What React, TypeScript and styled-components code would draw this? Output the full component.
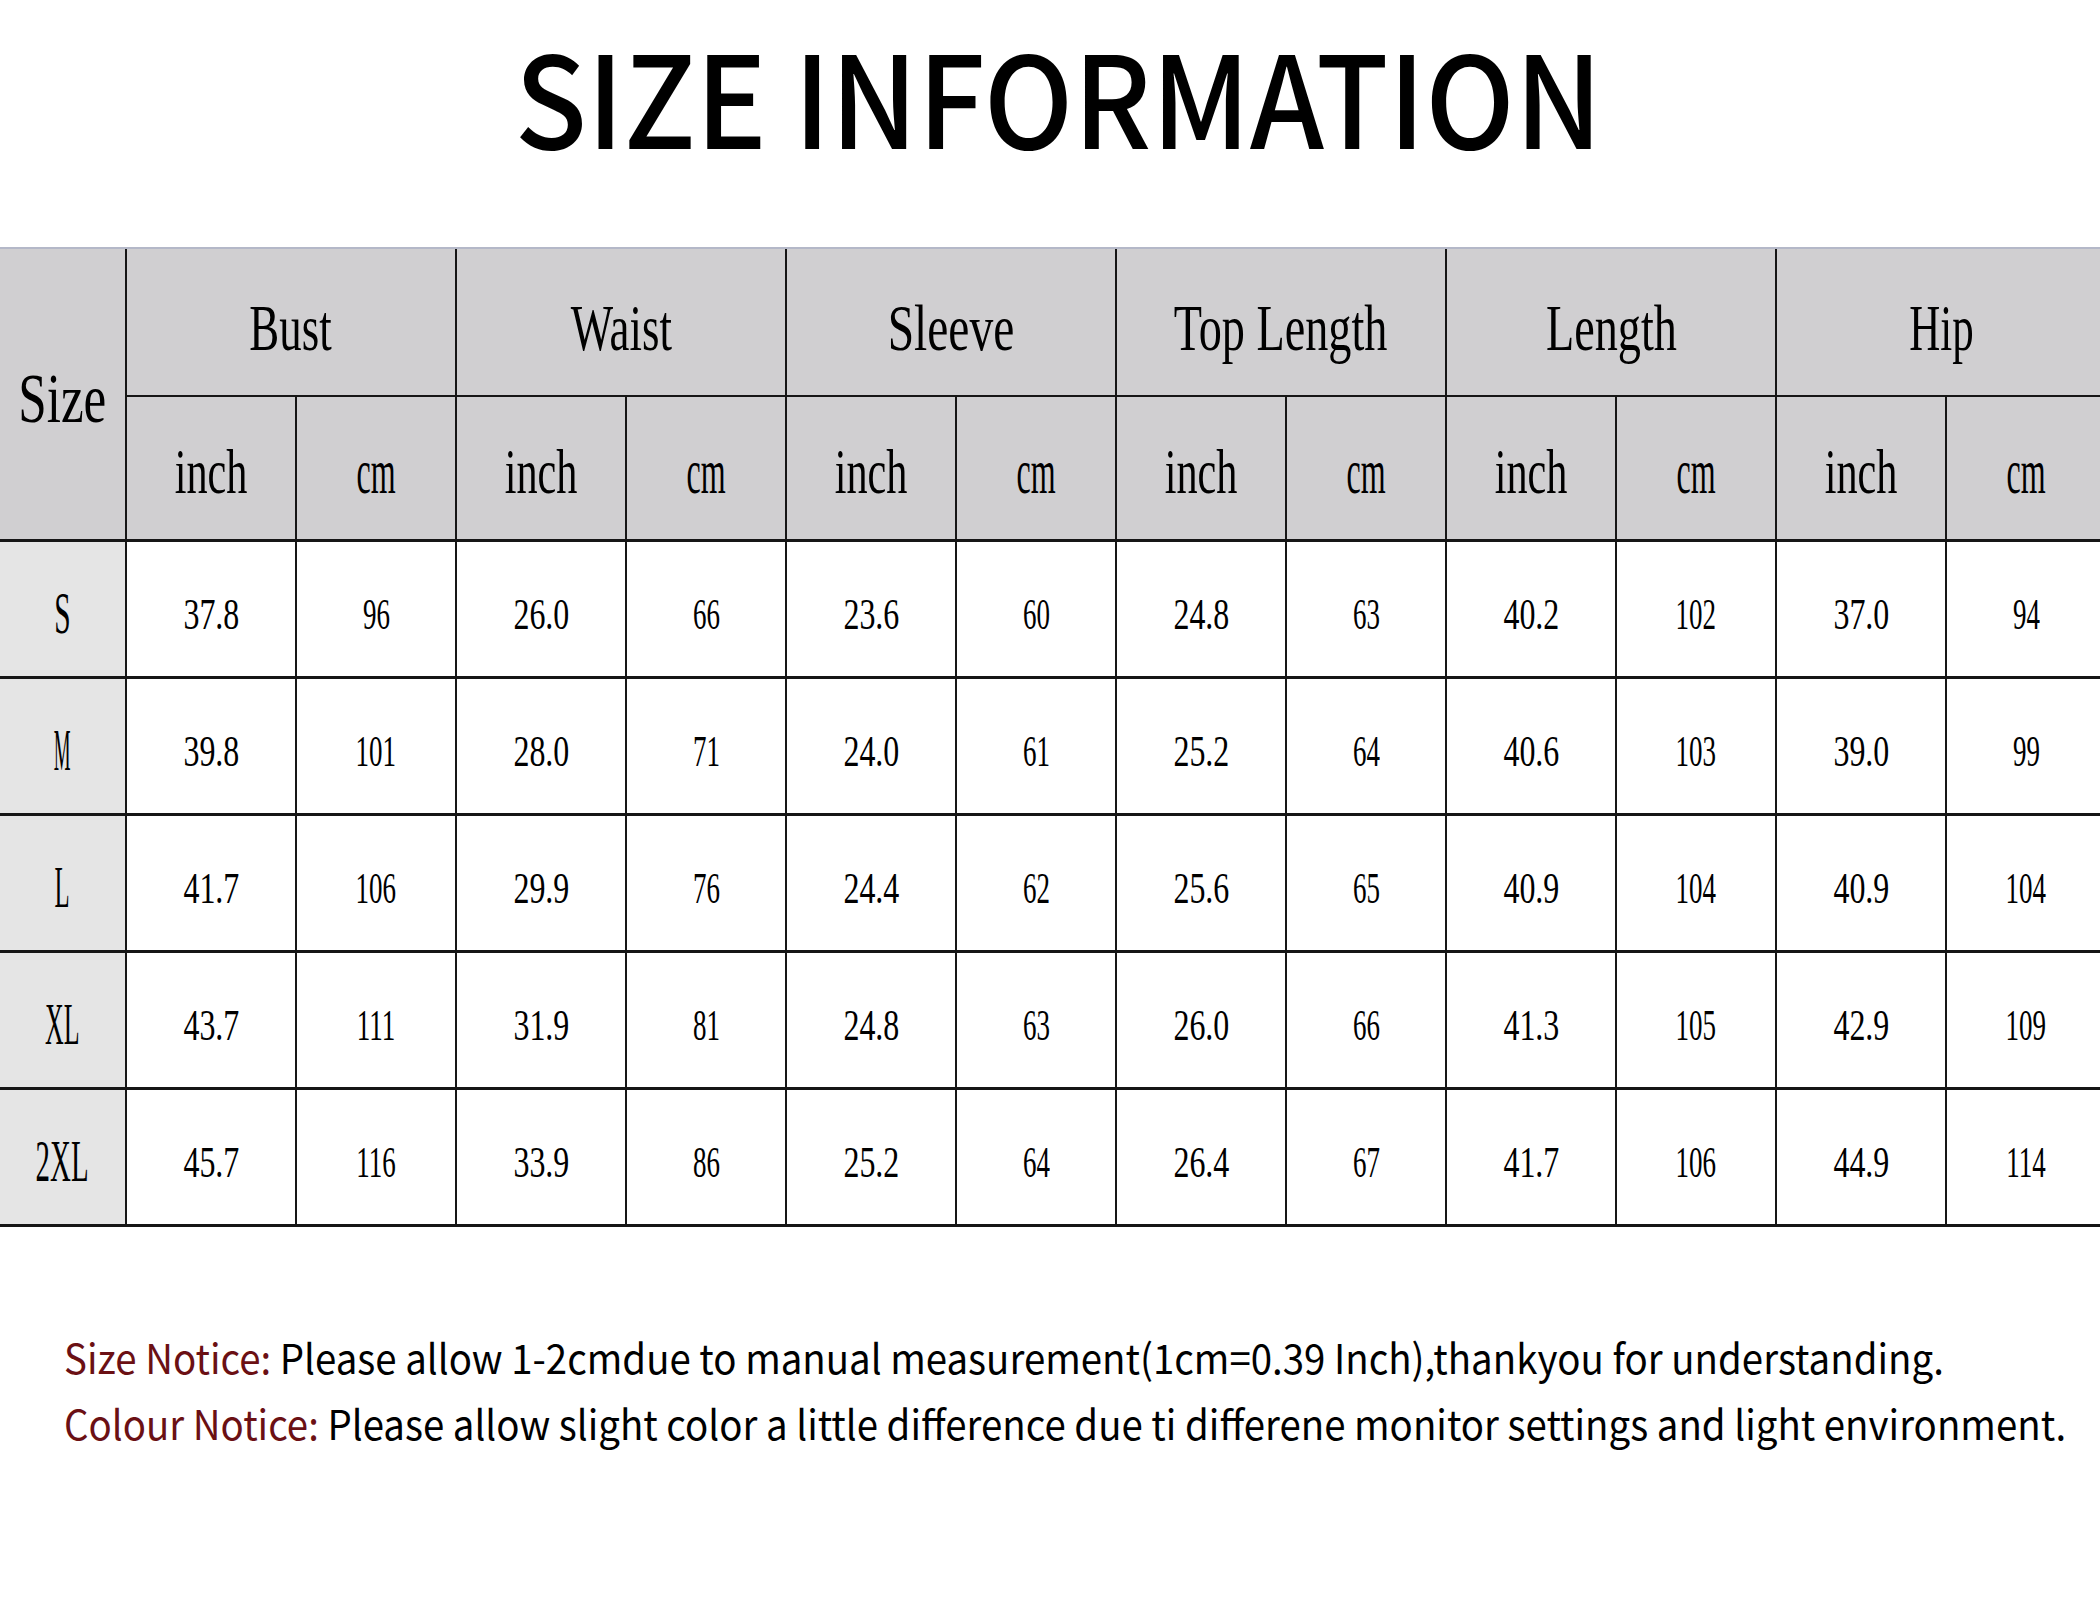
import React from "react";
import styled, { createGlobalStyle } from "styled-components";

const Global = createGlobalStyle`
  html, body { margin: 0; padding: 0; background: #ffffff; overflow: hidden; }
  body { width: 2100px; height: 1600px; }
`;

const Page = styled.div`
  width: 2100px;
  height: 1600px;
  overflow: hidden;
  background: #ffffff;
  display: flex;
  flex-direction: column;
`;

const Title = styled.h1`
  margin: 0;
  padding: 31px 0 0 18px;
  height: 247px;
  flex-shrink: 0;
  box-sizing: border-box;
  text-align: center;
  font-family: "Noto Sans CJK SC", "Noto Sans", sans-serif;
  font-weight: 500;
  font-size: 127px;
  line-height: 1;
  color: #000;
  transform: scaleX(0.936);
  transform-origin: center top;
`;

const TableWrap = styled.div`
  width: 2100px;
  flex-shrink: 0;
  overflow: hidden;
`;

const Grid = styled.div`
  display: grid;
  width: 2107px;
  grid-template-columns: 127px repeat(6, 170px 160px);
  grid-template-rows: 148px 145px repeat(5, 137px);
  border-top: 2px solid #b4b8c8;
  font-family: "Liberation Serif", "Times New Roman", serif;
  color: #000;
`;

type Tone = "head" | "side" | "body";

const Cell = styled.div<{
  $tone: Tone;
  $rowSpan?: number;
  $colSpan?: number;
  $bottom: number;
  $shift: number;
}>`
  box-sizing: border-box;
  display: flex;
  align-items: center;
  justify-content: center;
  overflow: visible;
  grid-row: span ${(p) => p.$rowSpan ?? 1};
  grid-column: span ${(p) => p.$colSpan ?? 1};
  border-right: 2px solid #161616;
  border-bottom: ${(p) => p.$bottom}px solid #161616;
  padding-top: ${(p) => p.$shift}px;
  background: ${(p) =>
    p.$tone === "head" ? "#d0cfd1" : p.$tone === "side" ? "#e5e5e5" : "#ffffff"};
`;

const Label = styled.span<{ $size: number; $sx: number }>`
  display: inline-block;
  white-space: nowrap;
  font-size: ${(p) => p.$size}px;
  line-height: 1;
  transform: scaleX(${(p) => p.$sx});
  transform-origin: center center;
`;

const Notes = styled.div`
  margin-top: 96px;
  padding-left: 64px;
  font-family: "Noto Sans CJK SC", "Noto Sans", sans-serif;
  font-size: 41px;
  line-height: 66px;
  color: #000;
  white-space: nowrap;
`;

const NoteLine = styled.div`
  transform: scaleX(0.937);
  transform-origin: left center;
`;

const NoteTag = styled.span`
  color: #6b1014;
`;

const groups: { name: string; sx: number }[] = [
  { name: "Bust", sx: 0.68 },
  { name: "Waist", sx: 0.68 },
  { name: "Sleeve", sx: 0.72 },
  { name: "Top Length", sx: 0.7 },
  { name: "Length", sx: 0.7 },
  { name: "Hip", sx: 0.65 },
];

const rows: { size: string; sx: number; values: string[] }[] = [
  { size: "S", sx: 0.5, values: ["37.8", "96", "26.0", "66", "23.6", "60", "24.8", "63", "40.2", "102", "37.0", "94"] },
  { size: "M", sx: 0.32, values: ["39.8", "101", "28.0", "71", "24.0", "61", "25.2", "64", "40.6", "103", "39.0", "99"] },
  { size: "L", sx: 0.42, values: ["41.7", "106", "29.9", "76", "24.4", "62", "25.6", "65", "40.9", "104", "40.9", "104"] },
  { size: "XL", sx: 0.44, values: ["43.7", "111", "31.9", "81", "24.8", "63", "26.0", "66", "41.3", "105", "42.9", "109"] },
  { size: "2XL", sx: 0.49, values: ["45.7", "116", "33.9", "86", "25.2", "64", "26.4", "67", "41.7", "106", "44.9", "114"] },
];

export default function App() {
  return (
    <Page>
      <Global />
      <Title>SIZE INFORMATION</Title>
      <TableWrap>
        <Grid>
          <Cell $tone="head" $rowSpan={2} $bottom={3} $shift={10}>
            <Label $size={70} $sx={0.73}>Size</Label>
          </Cell>
          {groups.map((g) => (
            <Cell key={g.name} $tone="head" $colSpan={2} $bottom={2} $shift={12}>
              <Label $size={66} $sx={g.sx}>{g.name}</Label>
            </Cell>
          ))}
          {groups.map((g) => (
            <React.Fragment key={g.name + "-units"}>
              <Cell $tone="head" $bottom={3} $shift={7}>
                <Label $size={64} $sx={0.66}>inch</Label>
              </Cell>
              <Cell $tone="head" $bottom={3} $shift={7}>
                <Label $size={64} $sx={0.5}>cm</Label>
              </Cell>
            </React.Fragment>
          ))}
          {rows.map((r) => (
            <React.Fragment key={r.size}>
              <Cell $tone="side" $bottom={3} $shift={8}>
                <Label $size={59} $sx={r.sx}>{r.size}</Label>
              </Cell>
              {r.values.map((v, i) => (
                <Cell key={i} $tone="body" $bottom={3} $shift={10}>
                  <Label $size={45} $sx={v.includes(".") ? 0.71 : 0.6}>{v}</Label>
                </Cell>
              ))}
            </React.Fragment>
          ))}
        </Grid>
      </TableWrap>
      <Notes>
        <NoteLine>
          <NoteTag>Size Notice:</NoteTag> Please allow 1-2cmdue to manual measurement(1cm=0.39 Inch),thankyou for understanding.
        </NoteLine>
        <NoteLine>
          <NoteTag>Colour Notice:</NoteTag> Please allow slight color a little difference due ti differene monitor settings and light environment.
        </NoteLine>
      </Notes>
    </Page>
  );
}
